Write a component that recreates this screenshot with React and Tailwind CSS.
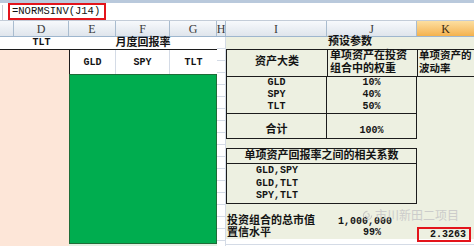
export default function App() {
  const grid = "border-[#d4dbe6]";
  const blk = "border-[#1c1c1c]";
  const hRows = Array.from({ length: 18 });
  const cols = [
    { l: "", w: "w-[14px]" },
    { l: "D", w: "w-[55px]" },
    { l: "E", w: "w-[47px]" },
    { l: "F", w: "w-[54px]" },
    { l: "G", w: "w-[47px]" },
    { l: "H", w: "w-[9px]" },
    { l: "I", w: "w-[101px]" },
    { l: "J", w: "w-[90px]" },
  ];
  return (
    <div className="w-[474px] h-[246px] overflow-hidden bg-white flex flex-col font-['Liberation_Mono','Noto_Sans_CJK_SC',monospace] text-[#141414]">
      {/* formula bar */}
      <div className="h-[21px] flex items-end bg-white border-t-[3px] border-[#b9c9dc] border-b border-b-[#c3ccd8]">
        <div className="w-[2px] h-[15px] border-l border-[#c8ced6] ml-[2px]" />
        <div className="ml-[4px] h-[17px] border-2 border-[#e3141b] flex items-center pl-[2px] pr-[4px] text-[10.5px] leading-none text-[#111]">
          =NORMSINV(J14)
        </div>
      </div>
      {/* column headers */}
      <div className="h-[16px] flex border-b border-[#9eb6ce] font-['Liberation_Serif',serif] text-[12px] text-[#3a3a3a]">
        {cols.map((c, i) => (
          <div
            key={i}
            className={`${c.w} shrink-0 h-full flex items-center justify-center overflow-hidden border-r border-[#a9bccf] bg-gradient-to-b from-[#f7f9fc] to-[#dfe5ec]`}
          >
            {c.l}
          </div>
        ))}
        <div className="flex-1 h-full flex items-center justify-center bg-gradient-to-b from-[#fcdfa0] to-[#f4b24c] text-[#3a2a10]">
          K
        </div>
      </div>
      {/* body */}
      <div className="flex-1 flex min-h-0">
        {/* left section */}
        <div className="w-[69px] shrink-0 flex flex-col">
          <div className="h-[12px] flex">
            <div className="w-[14px]" />
            <div className="w-[55px] flex items-center justify-center text-[10px] font-bold leading-none">TLT</div>
          </div>
          <div className={`flex-1 bg-[#fde6d8] border-t ${blk}`} />
        </div>
        <div className="w-[148px] shrink-0 flex flex-col">
          <div className="h-[12px] flex items-center justify-center text-[11px] font-bold leading-none">月度回报率</div>
          <div className={`h-[25px] flex border-t border-l ${blk} text-[10px] font-bold`}>
            <div className={`w-[46px] border-r ${grid} flex items-center justify-center`}>GLD</div>
            <div className={`w-[54px] border-r ${grid} flex items-center justify-center`}>SPY</div>
            <div className="flex-1 flex items-center justify-center">TLT</div>
          </div>
          <div className="h-[170px] bg-[#00ad4f] border border-[#1e6c38]" />
          <div className="flex-1 bg-[#e3f1e3]" />
        </div>
        <div className={`w-[9px] shrink-0 flex flex-col border-r ${grid}`}>
          {hRows.map((_, i) => (
            <div key={i} className={`h-[12px] shrink-0 border-b ${grid}`} />
          ))}
        </div>
        {/* right section */}
        <div className="flex-1 flex flex-col relative text-[10px] font-bold">
          <div className="h-[202px] bg-[#edf0e1] flex flex-col">
            <div className="h-[12px] pl-[102px] flex items-center text-[11px] leading-none">预设参数</div>
            <div className={`h-[28px] flex border-y border-l ${blk} text-[11px] leading-[13px]`}>
              <div className={`w-[101px] border-r ${blk} flex items-center justify-center`}>资产大类</div>
              <div className={`w-[90px] border-r ${blk} flex flex-col justify-center pl-[2px]`}>
                <span>单项资产在投资</span>
                <span>组合中的权重</span>
              </div>
              <div className="flex-1 flex flex-col justify-center pl-[1px] whitespace-nowrap text-[10.5px]">
                <span>单项资产的</span>
                <span>波动率</span>
              </div>
            </div>
            <div className={`w-[191px] border-x border-b ${blk} flex flex-col`}>
              {[
                ["GLD", "10%"],
                ["SPY", "40%"],
                ["TLT", "50%"],
              ].map(([a, b]) => (
                <div key={a} className="h-[12px] flex leading-none">
                  <div className={`w-[100px] border-r ${blk} flex items-center justify-center`}>{a}</div>
                  <div className="flex-1 flex items-center justify-center">{b}</div>
                </div>
              ))}
              <div className={`h-[25px] flex border-t ${blk} leading-none`}>
                <div className={`w-[100px] border-r ${blk} flex items-end justify-center pb-[2px] text-[11px]`}>合计</div>
                <div className="flex-1 flex items-end justify-center pb-[2px]">100%</div>
              </div>
            </div>
            <div className={`mt-[9px] w-[191px] h-[56px] border ${blk} flex flex-col leading-none`}>
              <div className={`h-[16px] border-b ${blk} flex items-center justify-center text-[11px]`}>
                单项资产回报率之间的相关系数
              </div>
              {["GLD,SPY", "GLD,TLT", "SPY,TLT"].map((t) => (
                <div key={t} className="h-[13px] w-[100px] flex items-center justify-center">{t}</div>
              ))}
            </div>
            <div className="mt-[12px] h-[12px] flex items-center leading-none">
              <div className="w-[112px] pl-[1px] text-[11px]">投资组合的总市值</div>
              <div>1,000,000</div>
            </div>
            <div className="h-[12px] flex items-center leading-none">
              <div className="w-[137px] pl-[1px] text-[11px]">置信水平</div>
              <div>99%</div>
            </div>
          </div>
          <div className="flex-1 flex flex-col bg-white">
            <div className={`h-[6px] border-b ${grid}`} />
          </div>
          {/* watermark */}
          <div className="absolute left-[136px] top-[172px] flex items-center gap-[2px] text-[#c9c9c9] opacity-90 font-normal">
            <svg width="11" height="11" viewBox="0 0 12 12" fill="none" stroke="#c4c4c4" strokeWidth="1.2">
              <path d="M6 1.5a4.5 4.5 0 1 0 4.5 4.5" />
              <path d="M6 4a2 2 0 1 1-2 2" />
            </svg>
            <span className="text-[12px] leading-none font-['Noto_Sans_CJK_SC',sans-serif]">市川新田二项目</span>
          </div>
          {/* red highlight */}
          <div className="absolute left-[191px] top-[190px] w-[54px] h-[15px] border-2 border-[#e3141b] flex items-center justify-end pr-[3px] text-[10px] leading-none">
            2.3263
          </div>
        </div>
      </div>
    </div>
  );
}
